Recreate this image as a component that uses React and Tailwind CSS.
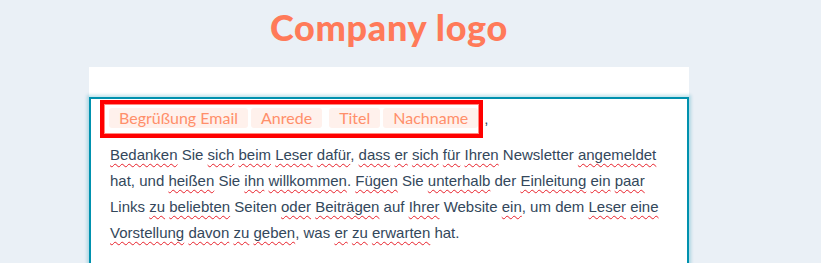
import React from "react";

const tokens = [
  { label: "Begrüßung Email", gap: "mr-[3px]" },
  { label: "Anrede", gap: "mr-[7px]" },
  { label: "Titel", gap: "mr-[3px]" },
  { label: "Nachname", gap: "" },
];

// words flagged by the spell checker get a wavy red underline
const lines = [
  "*Bedanken Sie *sich *beim *Leser *dafür, *dass *er *sich *für *Ihren Newsletter *angemeldet",
  "hat, und *heißen Sie *ihn *willkommen. *Fügen Sie *unterhalb der *Einleitung *ein *paar",
  "Links *zu *beliebten Seiten *oder *Beiträgen auf *Ihrer Website *ein, um dem *Leser *eine",
  "*Vorstellung *davon *zu *geben, was *er *zu *erwarten hat.",
];

const Word = ({ raw }) => {
  if (!raw.startsWith("*")) return <span>{raw}</span>;
  const text = raw.slice(1);
  const m = text.match(/^([^.,]+)([.,]?)$/);
  return (
    <span>
      <span className="underline decoration-wavy decoration-[#e8202a] decoration-1 underline-offset-[3px]">
        {m[1]}
      </span>
      {m[2]}
    </span>
  );
};

const App = () => {
  return (
    <div className="h-[263px] w-[821px] overflow-hidden bg-[#eaf0f6]">
      {/* Logo */}
      <div className="ml-[89px] flex h-[67px] w-[600px] items-start justify-center pt-[3px]">
        <h1 className="font-['Lato',sans-serif] text-[36px] font-black leading-[48px] tracking-[0.7px] text-[#ff7a59]">
          Company logo
        </h1>
      </div>

      <div className="ml-[89px] w-[600px]">
        <div className="h-[30px] bg-white"></div>

        {/* Editable text block */}
        <div className="h-[200px] border-2 border-[#0091ae] bg-white pl-[9px] pr-[20px] shadow-[0_0_3px_2px_rgba(0,145,174,0.25)]">
          <div className="flex items-end">
            <span className="mt-[1px] inline-flex border-4 border-[#ff0000]">
              <span className="inline-flex items-center border border-[#ff8a80] pb-[5px] pl-[4px] pr-[0px] pt-[3px]">
                {tokens.map((t) => (
                  <span
                    key={t.label}
                    className={`flex h-[20px] items-center rounded-[3px] bg-[#fff1ec] px-[10px] font-['Lato',sans-serif] text-[16px] text-[#ff8f6a] ${t.gap}`}
                  >
                    {t.label}
                  </span>
                ))}
              </span>
            </span>
            <span className="mb-[12px] ml-[1px] font-['Liberation_Sans',Arial,sans-serif] text-[15px] leading-none text-[#33475b]">
              ,
            </span>
          </div>

          <p className="mt-[4px] pl-[10px] font-['Liberation_Sans',Arial,sans-serif] text-[15px] leading-[26px] text-[#33475b]">
            {lines.map((line, i) => (
              <span key={i} className="block">
                {line.split(" ").map((w, j) => (
                  <React.Fragment key={j}>
                    {j > 0 && " "}
                    <Word raw={w} />
                  </React.Fragment>
                ))}
              </span>
            ))}
          </p>
        </div>
      </div>
    </div>
  );
};

export default App;
